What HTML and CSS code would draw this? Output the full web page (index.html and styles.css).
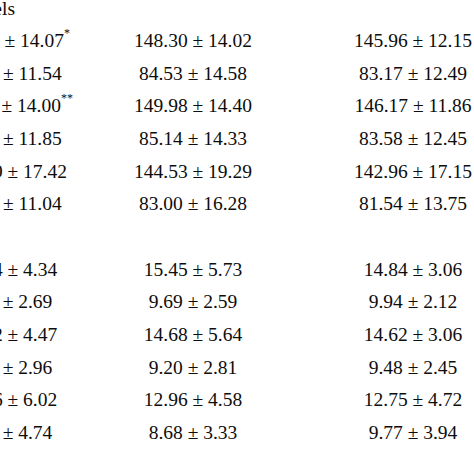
FILE: index.html
```html
<!DOCTYPE html>
<html>
<head>
<meta charset="utf-8">
<link rel="stylesheet" href="styles.css">
</head>
<body>
<div class="page">
  <div class="table">
    <div class="head"><span>Blood pressure levels</span></div>
    <div class="cell">150.12 ± 14.07<sup>*</sup></div><div class="cell">148.30 ± 14.02</div><div class="cell">145.96 ± 12.15</div>
    <div class="cell">86.34 ± 11.54</div><div class="cell">84.53 ± 14.58</div><div class="cell">83.17 ± 12.49</div>
    <div class="cell">151.26 ± 14.00<sup>**</sup></div><div class="cell">149.98 ± 14.40</div><div class="cell">146.17 ± 11.86</div>
    <div class="cell">86.71 ± 11.85</div><div class="cell">85.14 ± 14.33</div><div class="cell">83.58 ± 12.45</div>
    <div class="cell">145.39 ± 17.42</div><div class="cell">144.53 ± 19.29</div><div class="cell">142.96 ± 17.15</div>
    <div class="cell">84.05 ± 11.04</div><div class="cell">83.00 ± 16.28</div><div class="cell">81.54 ± 13.75</div>
    <div class="cell blank"></div><div class="cell blank"></div><div class="cell blank"></div>
    <div class="cell">16.14 ± 4.34</div><div class="cell">15.45 ± 5.73</div><div class="cell">14.84 ± 3.06</div>
    <div class="cell">9.85 ± 2.69</div><div class="cell">9.69 ± 2.59</div><div class="cell">9.94 ± 2.12</div>
    <div class="cell">15.02 ± 4.47</div><div class="cell">14.68 ± 5.64</div><div class="cell">14.62 ± 3.06</div>
    <div class="cell">9.42 ± 2.96</div><div class="cell">9.20 ± 2.81</div><div class="cell">9.48 ± 2.45</div>
    <div class="cell">13.56 ± 6.02</div><div class="cell">12.96 ± 4.58</div><div class="cell">12.75 ± 4.72</div>
    <div class="cell">8.91 ± 4.74</div><div class="cell">8.68 ± 3.33</div><div class="cell">9.77 ± 3.94</div>
  </div>
</div>
</body>
</html>
```
FILE: styles.css
```css
html, body {
  margin: 0;
  padding: 0;
  background: #fff;
}
.page {
  width: 474px;
  height: 474px;
  overflow: hidden;
}
.table {
  display: grid;
  grid-template-columns: 206px 164px 276px;
  grid-auto-rows: 32.67px;
  margin-left: -95px;
  margin-top: -8px;
  font-family: "Liberation Serif", "Times New Roman", serif;
  font-size: 19.5px;
  color: #0d0d0d;
}
.head {
  grid-column: 1 / 4;
  box-sizing: border-box;
  width: 110px;
  height: 29.5px;
  padding-top: 5px;
  display: flex;
  justify-content: flex-end;
  align-items: center;
  white-space: nowrap;
}
.cell {
  display: flex;
  justify-content: center;
  align-items: center;
  white-space: nowrap;
}
.cell sup {
  font-size: 12px;
  line-height: 0;
  align-self: flex-start;
  margin-top: 8px;
}
```
